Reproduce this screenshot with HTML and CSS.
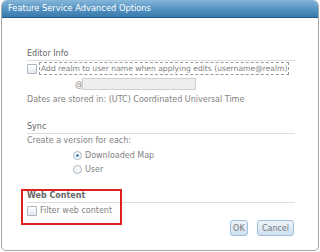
FILE: index.html
```html
<!DOCTYPE html>
<html lang="en">
<head>
  <meta charset="UTF-8">
  <title>Feature Service Advanced Options</title>
  <link rel="stylesheet" href="styles.css">
</head>
<body>
  <div class="dialog">
    <div class="titlebar">Feature Service Advanced Options</div>

    <div class="content">
      <!-- Editor info -->
      <div class="section editor">
        <div class="section-head">Editor Info</div>
        <label class="check-row">
          <span class="box"></span>
          <span class="focus-text">Add realm to user name when applying edits (username@realm)</span>
        </label>
        <div class="realm-row">
          <span class="at">@</span>
          <span class="realm-input"></span>
        </div>
        <div class="text">Dates are stored in: (UTC) Coordinated Universal Time</div>
      </div>

      <!-- Sync -->
      <div class="section sync">
        <div class="section-head">Sync</div>
        <div class="text">Create a version for each:</div>
        <div class="radios">
          <label class="radio-row"><span class="radio on"></span>Downloaded Map</label>
          <label class="radio-row"><span class="radio"></span>User</label>
        </div>
      </div>

      <!-- Web content -->
      <div class="section web">
        <div class="section-head bold">Web Content</div>
        <label class="check-row">
          <span class="box"></span>
          <span>Filter web content</span>
        </label>
        <div class="highlight"></div>
      </div>

      <div class="buttons">
        <button type="button" class="btn ok">OK</button>
        <button type="button" class="btn">Cancel</button>
      </div>
    </div>
  </div>
</body>
</html>
```

FILE: styles.css
```css
body {
  margin: 0;
  background: #fff;
  font-family: "DejaVu Sans", Verdana, sans-serif;
}

.dialog {
  width: 316px;
  height: 250px;
  margin-left: 1px;
  border: 1px solid #a8a8a8;
  border-top: none;
  border-radius: 6px 6px 5px 5px;
  background: #fff;
  overflow: hidden;
}

.titlebar {
  height: 17px;
  line-height: 17px;
  padding-left: 6px;
  font-size: 8.3px;
  color: #fff;
  background: linear-gradient(#86b6da, #4f8fbf 60%, #3a7aac);
  border-bottom: 1px solid #1f5a86;
}

.content {
  padding: 0 23px 0 25px;
  font-size: 8px;
  color: #828282;
}

.section {
  position: relative;
}

.section-head {
  color: #666;
  line-height: 10px;
  padding-bottom: 1px;
  border-bottom: 1px solid #dcdcdc;
  margin-bottom: 1px;
}

.section-head.bold {
  font-weight: bold;
}

.editor {
  margin-top: 31px;
}

.check-row {
  display: flex;
  align-items: center;
  gap: 2px;
  height: 13px;
}

.box {
  width: 8px;
  height: 8px;
  border: 1px solid #a9b6c4;
  border-radius: 1px;
  background: linear-gradient(#ffffff, #e3e9f0);
  flex: none;
}

.focus-text {
  flex: none;
  font-size: 7.6px;
  border: 1px dashed #9a9a9a;
  padding: 1px 1px;
  line-height: 9px;
  white-space: nowrap;
}

.realm-row {
  display: flex;
  align-items: center;
  margin-top: 3px;
  padding-left: 48px;
  height: 12px;
}

.at {
  width: 7px;
}

.realm-input {
  width: 112px;
  height: 10px;
  border: 1px solid #cfcfcf;
  background: #eeeeee;
}

.text {
  line-height: 10px;
}

.editor .text {
  margin-top: 5px;
}

.sync {
  margin-top: 17px;
}

.sync .text {
  margin-top: 2px;
}

.radios {
  padding-left: 46px;
  margin-top: 2px;
}

.radio-row {
  display: flex;
  align-items: center;
  gap: 3px;
  height: 14px;
}

.radio {
  width: 7px;
  height: 7px;
  border: 1px solid #aab5c0;
  border-radius: 50%;
  background: #f6f8fa;
  position: relative;
}

.radio.on::after {
  content: "";
  position: absolute;
  left: 2px;
  top: 2px;
  width: 3px;
  height: 3px;
  border-radius: 50%;
  background: #4a86c0;
}

.web {
  margin-top: 15px;
}

.web .check-row {
  gap: 3px;
}

/* red annotation frame */
.highlight {
  position: absolute;
  left: -6px;
  top: -2px;
  width: 97px;
  height: 32px;
  border: 2px solid #e02020;
}

.buttons {
  display: flex;
  justify-content: flex-end;
  gap: 9px;
  margin-top: 3px;
  padding-right: 1px;
}

.btn {
  height: 16px;
  padding: 0 4px;
  font-family: inherit;
  font-size: 8px;
  color: #777;
  border: 1px solid #9fbddb;
  border-radius: 3px;
  background: linear-gradient(#eef4fa, #cfe0f1);
}

.btn.ok {
  width: 18px;
  padding: 0;
}
```
